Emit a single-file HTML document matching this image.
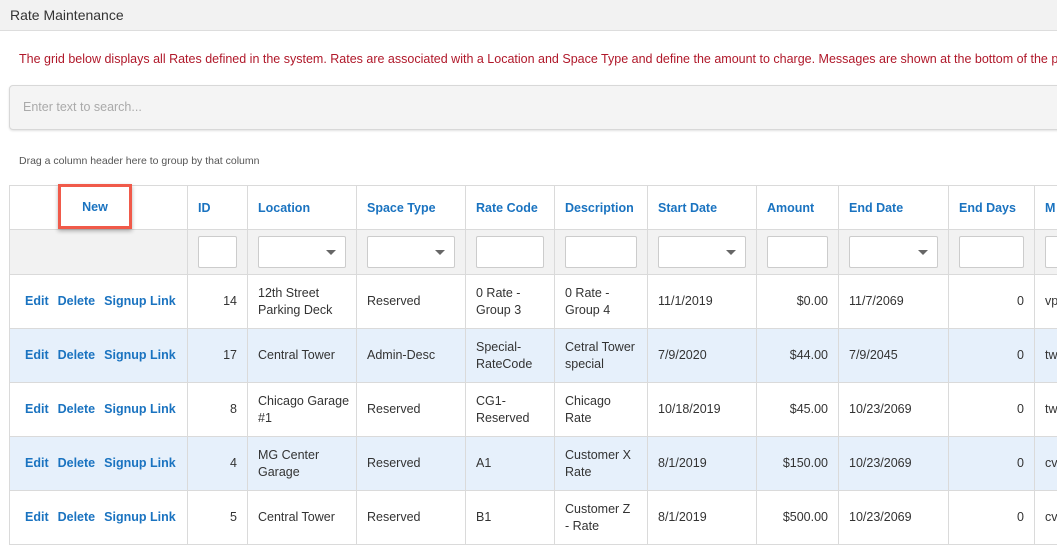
<!DOCTYPE html>
<html><head><style>
body{margin:0;width:1057px;height:544px;overflow:hidden;background:#fff;font-family:"Liberation Sans",sans-serif;position:relative}
.top{position:absolute;left:0;top:0;width:1057px;height:31px;background:#f2f2f2;border-bottom:1px solid #ddd;font-size:14px;color:#333;line-height:30px;padding-left:10px;box-sizing:border-box}
.msg{position:absolute;left:19px;top:52px;font-size:12.5px;color:#b0182a;white-space:nowrap}
.search{position:absolute;left:9px;top:85px;width:1070px;height:45px;background:#f4f4f4;border:1px solid #d8d8d8;border-radius:4px;box-shadow:0 1px 2px rgba(0,0,0,.12);box-sizing:border-box;font-size:12.5px;color:#aaa;line-height:43px;padding-left:13px}
.drag{position:absolute;left:19px;top:155px;font-size:10.5px;color:#555}
table{position:absolute;left:9px;top:185px;width:1085px;border-collapse:collapse;table-layout:fixed;font-size:12.5px;color:#333}
td,th{border:1px solid #dadada;padding:0 10px;box-sizing:border-box;white-space:nowrap;overflow:hidden}
th{height:44px;text-align:left;color:#1a73c0;font-weight:bold;font-size:12.5px}
tr.f td{height:45px;background:#f2f2f2;padding:0 10px}
tr.d td{height:54px;line-height:17px}
tr.alt td{background:#e6f0fb}
.box{height:32px;border:1px solid #ccc;background:#fff;box-sizing:border-box;border-radius:2px;position:relative}
.box.dd:after{content:"";position:absolute;right:9px;top:13px;border-left:5px solid transparent;border-right:5px solid transparent;border-top:5px solid #666}
td.lk{padding-left:15px;padding-right:0}
.a{color:#1a73c0;font-weight:bold;margin-right:9px}
.r{text-align:right}
.new{position:absolute;left:58px;top:184px;width:74px;height:45px;border:3px solid #f05a4a;box-sizing:border-box;box-shadow:0 2px 4px rgba(0,0,0,.3);text-align:center;line-height:41px;color:#1a73c0;font-weight:bold;font-size:12.5px;background:#fff}
</style></head><body>
<div class="top">Rate Maintenance</div>
<div class="msg">The grid below displays all Rates defined in the system. Rates are associated with a Location and Space Type and define the amount to charge. Messages are shown at the bottom of the page.</div>
<div class="search">Enter text to search...</div>
<div class="drag">Drag a column header here to group by that column</div>
<table>
<colgroup><col style="width:178px"><col style="width:60px"><col style="width:109px"><col style="width:109px"><col style="width:89px"><col style="width:93px"><col style="width:109px"><col style="width:82px"><col style="width:110px"><col style="width:86px"><col style="width:60px"></colgroup>
<tr><th></th><th>ID</th><th>Location</th><th>Space Type</th><th>Rate Code</th><th>Description</th><th>Start Date</th><th>Amount</th><th>End Date</th><th>End Days</th><th>M</th></tr>
<tr class="f"><td></td><td><div class="box"></div></td><td><div class="box dd"></div></td><td><div class="box dd"></div></td><td><div class="box"></div></td><td><div class="box"></div></td><td><div class="box dd"></div></td><td><div class="box"></div></td><td><div class="box dd"></div></td><td><div class="box"></div></td><td><div class="box"></div></td></tr>
<tr class="d"><td class="lk"><span class="a">Edit</span><span class="a">Delete</span><span class="a">Signup Link</span></td><td class="r">14</td><td>12th Street<br>Parking Deck</td><td>Reserved</td><td>0 Rate -<br>Group 3</td><td>0 Rate -<br>Group 4</td><td>11/1/2019</td><td class="r">$0.00</td><td>11/7/2069</td><td class="r">0</td><td>vp</td></tr>
<tr class="d alt"><td class="lk"><span class="a">Edit</span><span class="a">Delete</span><span class="a">Signup Link</span></td><td class="r">17</td><td>Central Tower</td><td>Admin-Desc</td><td>Special-<br>RateCode</td><td>Cetral Tower<br>special</td><td>7/9/2020</td><td class="r">$44.00</td><td>7/9/2045</td><td class="r">0</td><td>tw</td></tr>
<tr class="d"><td class="lk"><span class="a">Edit</span><span class="a">Delete</span><span class="a">Signup Link</span></td><td class="r">8</td><td>Chicago Garage<br>#1</td><td>Reserved</td><td>CG1-<br>Reserved</td><td>Chicago<br>Rate</td><td>10/18/2019</td><td class="r">$45.00</td><td>10/23/2069</td><td class="r">0</td><td>tw</td></tr>
<tr class="d alt"><td class="lk"><span class="a">Edit</span><span class="a">Delete</span><span class="a">Signup Link</span></td><td class="r">4</td><td>MG Center<br>Garage</td><td>Reserved</td><td>A1</td><td>Customer X<br>Rate</td><td>8/1/2019</td><td class="r">$150.00</td><td>10/23/2069</td><td class="r">0</td><td>cv</td></tr>
<tr class="d"><td class="lk"><span class="a">Edit</span><span class="a">Delete</span><span class="a">Signup Link</span></td><td class="r">5</td><td>Central Tower</td><td>Reserved</td><td>B1</td><td>Customer Z<br>- Rate</td><td>8/1/2019</td><td class="r">$500.00</td><td>10/23/2069</td><td class="r">0</td><td>cv</td></tr>
</table>
<div class="new">New</div>
</body></html>
